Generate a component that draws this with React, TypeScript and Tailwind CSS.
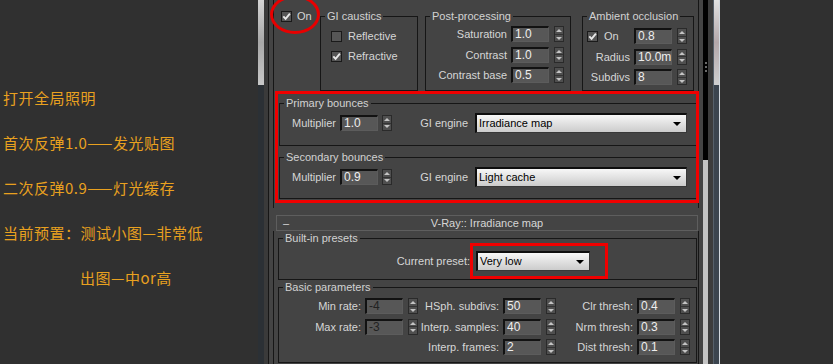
import type React from 'react'

const edge = 'border-[#161616]'

function Check({ on = false }: { on?: boolean }) {
  return (
    <span className="flex h-[11px] w-[11px] shrink-0 items-center justify-center border border-[#1a1a1a] bg-[#565656]">
      {on && (
        <svg width="9" height="9" viewBox="0 0 9 9">
          <path d="M1.3 4.3 L3.6 6.8 L7.9 1.6" stroke="#e8e8e8" strokeWidth="1.9" fill="none" />
        </svg>
      )}
    </span>
  )
}

function Spin() {
  return (
    <div className="flex h-[16px] w-[10px] shrink-0 flex-col border border-[#2a2a2a] bg-[#4f4f4f]">
      <div className="flex flex-1 items-center justify-center border-b border-[#333]">
        <span className="h-0 w-0 border-x-[3px] border-b-[3px] border-x-transparent border-b-[#c4c4c4]" />
      </div>
      <div className="flex flex-1 items-center justify-center">
        <span className="h-0 w-0 border-x-[3px] border-t-[3px] border-x-transparent border-t-[#c4c4c4]" />
      </div>
    </div>
  )
}

function Num({ value, dim = false }: { value: string; dim?: boolean }) {
  return (
    <div
      className={`h-[16px] w-[38px] shrink-0 overflow-hidden whitespace-nowrap border-t-2 border-l-2 border-r border-b border-t-[#121212] border-l-[#121212] border-r-[#5c5c5c] border-b-[#5c5c5c] bg-[#575757] pl-[2px] text-[12px] leading-[13px] ${
        dim ? 'text-[#222]' : 'text-[#eeeeee]'
      }`}
    >
      {value}
    </div>
  )
}

function Drop({ value, className }: { value: string; className: string }) {
  return (
    <div
      className={`flex h-[20px] shrink-0 items-center justify-between border-t-2 border-l-2 border-r border-b border-t-[#0e0e0e] border-l-[#0e0e0e] border-r-[#383838] border-b-[#383838] bg-gradient-to-b from-[#f7f7f7] to-[#cccccc] pl-[2px] pr-[5px] text-[11px] text-black ${className}`}
    >
      <span>{value}</span>
      <span className="h-0 w-0 border-x-[4px] border-t-[4px] border-x-transparent border-t-black" />
    </div>
  )
}

function Group({
  title,
  className,
  children,
}: {
  title: string
  className: string
  children?: React.ReactNode
}) {
  return (
    <div className={`border ${edge} ${className}`}>
      <div className="-mt-[7px] ml-[4px] w-fit bg-[#444444] px-[2px] leading-[13px] text-[#d2d2d2]">{title}</div>
      {children}
    </div>
  )
}

function Row({
  label,
  lw,
  value,
  dim,
}: {
  label: string
  lw: string
  value: string
  dim?: boolean
}) {
  return (
    <div className="flex items-center">
      <span className={`${lw} whitespace-nowrap text-right`}>{label}</span>
      <div className="ml-[4px]">
        <Num value={value} dim={dim} />
      </div>
      <div className="ml-[5px]">
        <Spin />
      </div>
    </div>
  )
}

function Bounces({ title, mult, engine, className }: { title: string; mult: string; engine: string; className: string }) {
  return (
    <Group title={title} className={`ml-[5px] w-[418px] ${className}`}>
      <div className="mt-[1px] flex h-[24px] items-center pl-[10px]">
        <span className="w-[46px] text-right">Multiplier</span>
        <div className="ml-[4px]">
          <Num value={mult} />
        </div>
        <div className="ml-[4px]">
          <Spin />
        </div>
        <span className="w-[76px] text-right">GI engine</span>
        <Drop value={engine} className="ml-[7px] w-[212px]" />
      </div>
    </Group>
  )
}

export default function App() {
  return (
    <div className="relative flex h-[364px] w-[833px] overflow-hidden bg-[#303030] font-['Liberation_Sans',Arial,sans-serif] text-[11px] text-[#d6d6d6]">
      {/* notes */}
      <div className="w-[258px] shrink-0 pl-[3px] pt-[75px] font-['Noto_Sans_CJK_SC','Noto_Sans',sans-serif] text-[15px] leading-[45px] tracking-[0.5px] text-[#e9a11f]">
        <p>打开全局照明</p>
        <p>首次反弹1.0——发光贴图</p>
        <p>二次反弹0.9——灯光缓存</p>
        <p>当前预置：测试小图—非常低</p>
        <p className="pl-[77px]">出图—中or高</p>
      </div>

      {/* left window edge */}
      <div className="flex w-[6px] shrink-0 flex-col">
        <div className="h-[85px] bg-gradient-to-b from-[#d4d4d4] via-[#a8a8a8] to-[#c8c8c8]" />
        <div className="flex-1 bg-[#2b3035]" />
      </div>
      <div className="w-[4px] shrink-0 bg-[#3a3a3a]" />

      {/* panel */}
      <div className="w-[435px] shrink-0 border-l border-[#161616] bg-[#444444]">
        <div className={`ml-[4px] h-[208px] w-[426px] border-x ${edge}`}>
          <div className="flex h-[92px]">
            <div className="flex h-[11px] w-[46px] shrink-0 items-center gap-[5px] pl-[7px] mt-[11px]">
              <Check on />
              <span>On</span>
            </div>

            <Group title="GI caustics" className="mt-[16px] h-[75px] w-[98px] shrink-0">
              <div className="mt-[3px] flex h-[20px] items-center gap-[6px] pl-[10px]">
                <Check />
                <span>Reflective</span>
              </div>
              <div className="flex h-[20px] items-center gap-[6px] pl-[10px]">
                <Check on />
                <span>Refractive</span>
              </div>
            </Group>

            <Group title="Post-processing" className="ml-[7px] mt-[16px] h-[75px] w-[146px] shrink-0">
              <div className="mt-[3px] flex flex-col gap-[4px] -ml-[4px]">
                <Row label="Saturation" lw="w-[85px]" value="1.0" />
                <Row label="Contrast" lw="w-[85px]" value="1.0" />
                <Row label="Contrast base" lw="w-[85px]" value="0.5" />
              </div>
            </Group>

            <Group title="Ambient occlusion" className="ml-[11px] mt-[16px] h-[75px] w-[112px] shrink-0">
              <div className="mt-[5px] flex flex-col gap-[4px]">
                <div className="flex items-center">
                  <div className="flex w-[47px] items-center gap-[6px] pl-[4px]">
                    <Check on />
                    <span>On</span>
                  </div>
                  <div className="ml-[4px]">
                    <Num value="0.8" />
                  </div>
                  <div className="ml-[5px]">
                    <Spin />
                  </div>
                </div>
                <Row label="Radius" lw="w-[47px]" value="10.0mm" />
                <Row label="Subdivs" lw="w-[47px]" value="8" />
              </div>
            </Group>
          </div>

          <Bounces title="Primary bounces" mult="1.0" engine="Irradiance map" className="mt-[11px] h-[43px]" />
          <Bounces title="Secondary bounces" mult="0.9" engine="Light cache" className="mt-[11px] h-[42px]" />
        </div>

        {/* rollout header */}
        <div className="ml-[7px] mt-[7px] flex h-[16px] w-[422px] items-center border border-[#5e5e5e]">
          <span className="w-[16px] pl-[6px]">–</span>
          <span className="flex-1 text-center">V-Ray:: Irradiance map</span>
          <span className="w-[16px]" />
        </div>

        <div className={`ml-[4px] h-[140px] w-[426px] border-x ${edge} pt-px`}>
          <Group title="Built-in presets" className="ml-[4px] mt-[6px] h-[42px] w-[419px]">
            <div className="mt-[5px] flex h-[22px] items-center">
              <span className="w-[191px] text-right">Current preset:</span>
              <Drop value="Very low" className="ml-[6px] w-[114px]" />
            </div>
          </Group>

          <Group title="Basic parameters" className="ml-[4px] mt-[7px] h-[76px] w-[419px]">
            <div className="mt-[4px] flex flex-col gap-[4px]">
              <div className="flex">
                <Row label="Min rate:" lw="w-[82px]" value="-4" dim />
                <Row label="HSph. subdivs:" lw="w-[81px]" value="50" />
                <Row label="Clr thresh:" lw="w-[77px]" value="0.4" />
              </div>
              <div className="flex">
                <Row label="Max rate:" lw="w-[82px]" value="-3" dim />
                <Row label="Interp. samples:" lw="w-[81px]" value="40" />
                <Row label="Nrm thresh:" lw="w-[77px]" value="0.3" />
              </div>
              <div className="flex">
                <div className="w-[139px]" />
                <Row label="Interp. frames:" lw="w-[81px]" value="2" />
                <Row label="Dist thresh:" lw="w-[77px]" value="0.1" />
              </div>
            </div>
          </Group>
        </div>
      </div>

      {/* scrollbar and right window edge */}
      <div className="flex w-[5px] shrink-0 flex-col">
        <div className="h-[160px] bg-black pt-[62px]">
          <div className="mx-auto h-[10px] w-0 border-l-2 border-dotted border-[#6a6a6a]" />
        </div>
        <div className="flex-1 bg-[#c4c4c4]" />
      </div>
      <div className="w-[5px] shrink-0 bg-[#3c3c3c]" />
      <div className="w-px shrink-0 bg-[#56606a]" />
      <div className="flex w-[5px] shrink-0 flex-col">
        <div className="h-[85px] bg-gradient-to-b from-[#e2e2e2] via-[#b4a8aa] to-[#cfcfcf]" />
        <div className="flex-1 bg-[#3b444e]" />
      </div>
      <div className="w-px shrink-0 bg-[#d2d8de]" />

      {/* annotations */}
      <div className="absolute left-[270px] top-[-5px] h-[39px] w-[50px] rounded-[50%] border-[3px] border-[#e80000]" />
      <div className="absolute left-[275px] top-[91px] h-[112px] w-[424px] border-[3px] border-[#f00000]" />
      <div className="absolute left-[470px] top-[243px] h-[36px] w-[138px] border-[3px] border-[#f00000]" />
    </div>
  )
}
